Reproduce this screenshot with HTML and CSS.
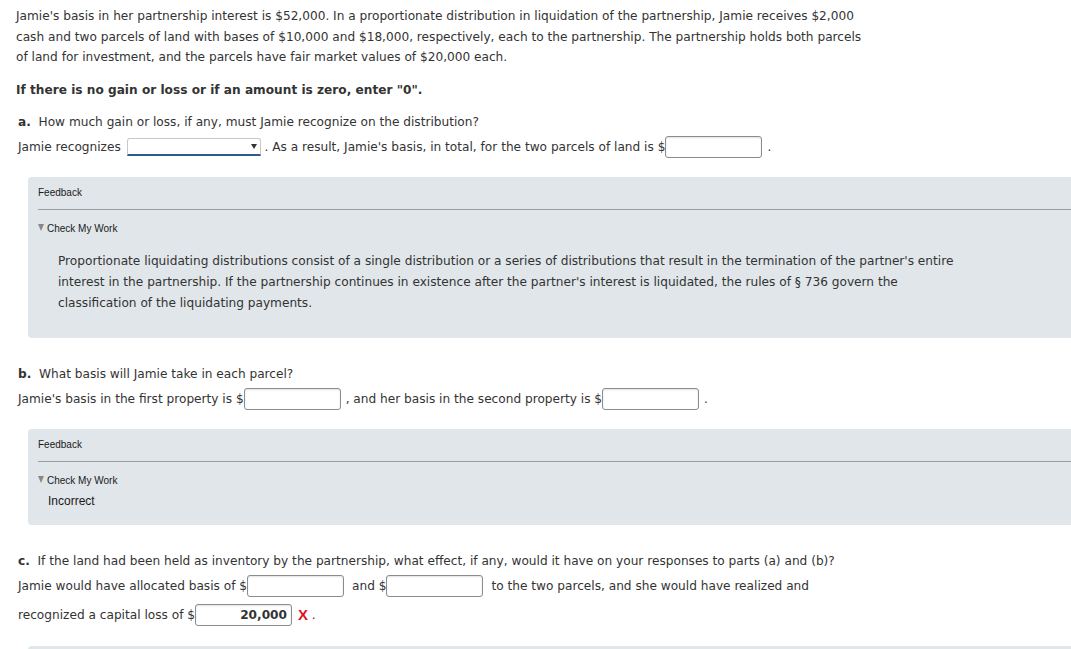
FILE: index.html
```html
<!DOCTYPE html>
<html>
<head>
<meta charset="utf-8">
<link rel="stylesheet" href="styles.css">
</head>
<body>
<div class="question">
  <p class="intro">Jamie's basis in her partnership interest is $52,000. In a proportionate distribution in liquidation of the partnership, Jamie receives $2,000 cash and two parcels of land with bases of $10,000 and $18,000, respectively, each to the partnership. The partnership holds both parcels of land for investment, and the parcels have fair market values of $20,000 each.</p>
  <p class="instruction">If there is no gain or loss or if an amount is zero, enter "0".</p>

  <div class="part">
    <p class="part-title"><b>a.</b>&nbsp; How much gain or loss, if any, must Jamie recognize on the distribution?</p>
    <p class="answer-line">Jamie recognizes <span class="select"><span class="caret"></span></span> . As a result, Jamie's basis, in total, for the two parcels of land is $<span class="input"></span> <span class="dot">.</span></p>
  </div>

  <div class="feedback fb-long">
    <div class="fb-label">Feedback</div>
    <div class="fb-rule"></div>
    <div class="fb-check"><span class="tri"></span>Check My Work</div>
    <p class="fb-text">Proportionate liquidating distributions consist of a single distribution or a series of distributions that result in the termination of the partner's entire interest in the partnership. If the partnership continues in existence after the partner's interest is liquidated, the rules of § 736 govern the classification of the liquidating payments.</p>
  </div>

  <div class="part after-box">
    <p class="part-title"><b>b.</b>&nbsp; What basis will Jamie take in each parcel?</p>
    <p class="answer-line">Jamie's basis in the first property is $<span class="input"></span> <span class="gap">, and her basis in the second property is $</span><span class="input"></span> <span class="dot">.</span></p>
  </div>

  <div class="feedback fb-short">
    <div class="fb-label">Feedback</div>
    <div class="fb-rule"></div>
    <div class="fb-check"><span class="tri"></span>Check My Work</div>
    <div class="fb-result">Incorrect</div>
  </div>

  <div class="part after-box">
    <p class="part-title"><b>c.</b>&nbsp; If the land had been held as inventory by the partnership, what effect, if any, would it have on your responses to parts (a) and (b)?</p>
    <p class="answer-line">Jamie would have allocated basis of $<span class="input"></span> <span class="gap-wide">and $</span><span class="input"></span> <span class="gap-wide">to the two parcels, and she would have realized and</span></p>
    <p class="answer-line line2">recognized a capital loss of $<span class="input filled">20,000</span> <span class="wrong">X</span> .</p>
  </div>

  <div class="feedback fb-next"></div>
</div>
</body>
</html>
```

FILE: styles.css
```css
html, body {
  margin: 0;
  padding: 0;
  background: #ffffff;
}

body {
  font-family: "DejaVu Sans", Verdana, sans-serif;
  font-size: 12.15px;
  color: #333333;
  overflow: hidden;
}

.question {
  padding: 6px 0 0 16px;
}

p {
  margin: 0;
}

.intro {
  width: 850px;
  line-height: 20.5px;
}

.instruction {
  font-weight: bold;
  margin-top: 12px;
  line-height: 20px;
}

.part {
  padding-left: 2px;
}

.part-title {
  margin-top: 12px;
  line-height: 20px;
}

.after-box .part-title {
  margin-top: 26px;
}

.part-title b {
  font-weight: bold;
}

.answer-line {
  margin-top: 4px;
  line-height: 22px;
  height: 22px;
  display: flex;
  align-items: center;
  white-space: pre;
}

.answer-line.line2 {
  margin-top: 7px;
}

.select {
  display: inline-block;
  position: relative;
  width: 132px;
  height: 15px;
  margin-left: 2px;
  border: 1px solid #c8c8c8;
  border-bottom: 2px solid #2f5b8a;
  border-radius: 3px 3px 0 0;
  background: #ffffff;
}

.caret {
  position: absolute;
  right: 3px;
  top: 5px;
  width: 0;
  height: 0;
  border-left: 3.5px solid transparent;
  border-right: 3.5px solid transparent;
  border-top: 5px solid #333333;
}

.input {
  display: inline-block;
  box-sizing: border-box;
  width: 97px;
  height: 22px;
  border: 1px solid #8c8c8c;
  border-radius: 3px;
  background: #ffffff;
  box-shadow: inset 0 1px 2px rgba(0, 0, 0, 0.12);
}

.input.filled {
  text-align: right;
  font-weight: bold;
  padding-right: 4px;
  line-height: 20px;
  color: #333333;
}

.dot {
  margin-left: 5px;
}

.gap {
  margin-left: 5px;
}

.gap-wide {
  margin-left: 8px;
}

.wrong {
  color: #e0141e;
  font-weight: bold;
  font-family: "Liberation Sans", Arial, sans-serif;
  font-size: 15px;
  margin-left: 6px;
}

.feedback {
  margin: 19px 0 0 12px;
  background: #e0e6e9;
  border-radius: 4px 0 0 4px;
  padding: 10px 0 22px 10px;
  font-family: "Liberation Sans", Arial, sans-serif;
  color: #1a1a1a;
}

.fb-long {
  padding-bottom: 24px;
}

.fb-label {
  font-size: 10px;
  line-height: 12px;
}

.fb-rule {
  height: 1px;
  background: #9a9ea1;
  margin-top: 10px;
}

.fb-check {
  font-size: 10px;
  line-height: 12px;
  margin-top: 13px;
  display: flex;
  align-items: center;
}

.tri {
  display: inline-block;
  width: 0;
  height: 0;
  border-left: 3px solid transparent;
  border-right: 3px solid transparent;
  border-top: 7px solid #888888;
  margin-right: 3px;
  margin-top: -2px;
}

.fb-text {
  font-family: "DejaVu Sans", Verdana, sans-serif;
  font-size: 12.15px;
  color: #333333;
  line-height: 21px;
  margin: 16px 0 0 20px;
  width: 900px;
}

.fb-result {
  font-size: 12px;
  line-height: 14px;
  margin: 7px 0 0 10px;
}

.fb-short {
  padding-bottom: 17px;
}

.fb-next {
  margin-top: 20px;
  height: 20px;
  padding: 0;
}
```
